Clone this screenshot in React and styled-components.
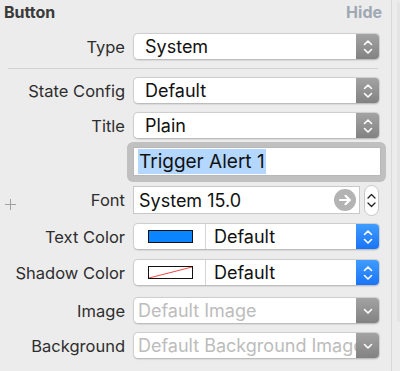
import React from "react";
import styled, { createGlobalStyle } from "styled-components";

const Global = createGlobalStyle`
  html, body { margin: 0; padding: 0; background: #ececec; }
  body { font-family: Inter, "Noto Sans", sans-serif; -webkit-font-smoothing: antialiased; }
`;

const Frame = styled.div`
  width: 400px;
  height: 371px;
  display: flex;
  background: #ececec;
  overflow: hidden;
`;

const Panel = styled.div`
  width: 392px;
  border-right: 1px solid #d9d9d9;
  display: flex;
  flex-direction: column;
  box-sizing: border-box;
`;

const Track = styled.div`
  flex: 1;
  display: flex;
  justify-content: flex-end;
  padding-top: 2px;
`;

const Thumb = styled.div`
  width: 3px;
  height: 320px;
  border-radius: 2px;
  background: #e4e4e4;
`;

const Header = styled.div`
  display: flex;
  justify-content: space-between;
  align-items: center;
  height: 22px;
  padding: 1px 9px 0 4px;
  font-size: 16px;
  font-weight: 700;
  color: #3a3a3a;
`;

const Hide = styled.span`
  color: #9ea8b3;
`;

const Row = styled.div`
  display: flex;
  align-items: center;
  margin-top: ${(p) => p.$mt}px;
  height: ${(p) => p.$h || 27}px;
  position: relative;
`;

const Label = styled.div`
  width: 125px;
  flex: none;
  text-align: right;
  font-size: 16.5px;
  color: #2e2e2e;
  padding-right: 8px;
  box-sizing: content-box;
  white-space: nowrap;
`;

const Plus = styled.div`
  position: absolute;
  left: 5px;
  top: 13px;
  width: 11px;
  height: 11px;
  &::before, &::after {
    content: "";
    position: absolute;
    background: #a0a0a0;
  }
  &::before { left: 5px; top: 0; width: 1px; height: 11px; }
  &::after { top: 5px; left: 0; height: 1px; width: 11px; }
`;

const Divider = styled.div`
  height: 1px;
  background: #d2d2d2;
  margin: 8px 13px 0 8px;
`;

const Popup = styled.div`
  width: 247px;
  height: 27px;
  box-sizing: border-box;
  display: flex;
  align-items: stretch;
  background: #fff;
  border: 1px solid #cfcfcf;
  border-bottom-color: #bdbdbd;
  border-radius: 5px;
  overflow: hidden;
  box-shadow: 0 0.5px 1px rgba(0,0,0,0.08);
`;

const Value = styled.div`
  flex: 1;
  display: flex;
  align-items: center;
  padding-left: ${(p) => p.$pl ?? 11}px;
  font-size: 18px;
  color: ${(p) => (p.$disabled ? "#bcbcbc" : "#111")};
  white-space: nowrap;
  overflow: hidden;
`;

const Stepper = styled.div`
  width: 23px;
  flex: none;
  display: flex;
  align-items: center;
  justify-content: center;
  background: ${(p) =>
    p.$blue
      ? "linear-gradient(#3f9cff, #1a74f6)"
      : "linear-gradient(#a3a3a3, #828282)"};
`;

const Swatch = styled.div`
  width: 72px;
  flex: none;
  display: flex;
  align-items: center;
  justify-content: center;
  border-right: 1px solid #d4d4d4;
  padding-left: 2px;
  box-sizing: border-box;
`;

const Chip = styled.div`
  width: 45px;
  height: 13px;
  box-sizing: border-box;
  border: 1px solid #111;
  background: ${(p) => p.$color};
  position: relative;
  overflow: hidden;
`;

const Ring = styled.div`
  margin-left: -6px;
  width: 259px;
  height: 40px;
  box-sizing: border-box;
  padding: 5px 5px 6px 6px;
  background: #c0c0c0;
  border-radius: 6px;
`;

const Field = styled.div`
  height: 100%;
  box-sizing: border-box;
  background: #fff;
  border: 1px solid #b8b8b8;
  display: flex;
  align-items: center;
  padding-left: 4px;
  font-size: 19px;
  color: #111;
`;

const Selected = styled.span`
  background: #b3d7ff;
  padding: 1px 1px;
`;

const FontField = styled.div`
  width: 227px;
  height: 28px;
  box-sizing: border-box;
  background: #fff;
  border: 1px solid #c8c8c8;
  display: flex;
  align-items: center;
  justify-content: space-between;
  padding: 0 3px 0 5px;
  font-size: 18px;
  color: #111;
`;

const CircleBtn = styled.div`
  width: 22px;
  height: 22px;
  border-radius: 50%;
  background: #b3b3b3;
  display: flex;
  align-items: center;
  justify-content: center;
`;

const SmallStepper = styled.div`
  margin-left: 4px;
  width: 15px;
  height: 31px;
  box-sizing: border-box;
  background: #fff;
  border: 1px solid #c8c8c8;
  border-radius: 8px;
  display: flex;
  flex-direction: column;
  align-items: center;
  justify-content: center;
  gap: 3px;
`;

const UpDown = ({ color = "#fff", w = 10 }) => (
  <svg width={w} height="16" viewBox="0 0 10 16" fill="none" stroke={color} strokeWidth="1.6" strokeLinecap="round" strokeLinejoin="round">
    <path d="M1.5 5.5 L5 2 L8.5 5.5" />
    <path d="M1.5 10.5 L5 14 L8.5 10.5" />
  </svg>
);

const Down = () => (
  <svg width="10" height="8" viewBox="0 0 10 8" fill="none" stroke="#fff" strokeWidth="1.6" strokeLinecap="round" strokeLinejoin="round">
    <path d="M1.5 2.5 L5 6 L8.5 2.5" />
  </svg>
);

const Arrow = () => (
  <svg width="14" height="12" viewBox="0 0 14 12" fill="none" stroke="#fff" strokeWidth="2.2" strokeLinecap="round" strokeLinejoin="round">
    <path d="M2 6 H11.5" />
    <path d="M7.5 1.8 L11.8 6 L7.5 10.2" />
  </svg>
);

const Chev = ({ up }) => (
  <svg width="9" height="6" viewBox="0 0 9 6" fill="none" stroke="#222" strokeWidth="1.3" strokeLinecap="round" strokeLinejoin="round">
    <path d={up ? "M1 5 L4.5 1.5 L8 5" : "M1 1 L4.5 4.5 L8 1"} />
  </svg>
);

const PopupRow = ({ label, value, mt, disabled }) => (
  <Row $mt={mt}>
    <Label>{label}</Label>
    <Popup>
      <Value $disabled={disabled} $pl={disabled ? 4 : 11}>{value}</Value>
      <Stepper>{disabled ? <Down /> : <UpDown />}</Stepper>
    </Popup>
  </Row>
);

const ColorRow = ({ label, mt, color, slash }) => (
  <Row $mt={mt}>
    <Label>{label}</Label>
    <Popup>
      <Swatch>
        <Chip $color={color}>
          {slash && (
            <svg width="43" height="11" viewBox="0 0 43 11" style={{ position: "absolute", left: 0, top: 0 }}>
              <line x1="0" y1="11" x2="43" y2="0" stroke="#f04848" strokeWidth="1" />
            </svg>
          )}
        </Chip>
      </Swatch>
      <Value $pl={8}>Default</Value>
      <Stepper $blue>
        <UpDown />
      </Stepper>
    </Popup>
  </Row>
);

export default function App() {
  return (
    <Frame>
      <Global />
      <Panel>
        <Header>
          <span>Button</span>
          <Hide>Hide</Hide>
        </Header>
        <PopupRow label="Type" value="System" mt={10} />
        <Divider />
        <PopupRow label="State Config" value="Default" mt={8} />
        <PopupRow label="Title" value="Plain" mt={8} />
        <Row $mt={3} $h={40}>
          <Label />
          <Ring>
            <Field>
              <Selected>Trigger Alert 1</Selected>
            </Field>
          </Ring>
        </Row>
        <Row $mt={4} $h={28}>
          <Plus />
          <Label>Font</Label>
          <FontField>
            <span>System 15.0</span>
            <CircleBtn>
              <Arrow />
            </CircleBtn>
          </FontField>
          <SmallStepper>
            <Chev up />
            <Chev />
          </SmallStepper>
        </Row>
        <ColorRow label="Text Color" mt={9} color="#0a84ff" />
        <ColorRow label="Shadow Color" mt={9} color="#fff" slash />
        <PopupRow label="Image" value="Default Image" mt={11} disabled />
        <PopupRow label="Background" value="Default Background Image" mt={8} disabled />
      </Panel>
      <Track>
        <Thumb />
      </Track>
    </Frame>
  );
}
